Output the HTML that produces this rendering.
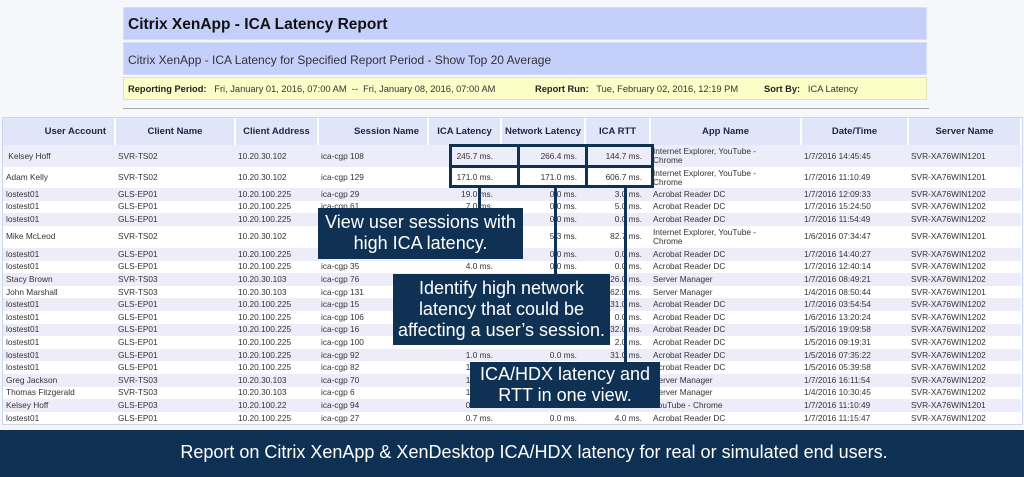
<!DOCTYPE html>
<html><head><meta charset="utf-8"><style>
*{margin:0;padding:0;box-sizing:border-box}
body{width:1024px;height:477px;overflow:hidden;background:#f6f7fb;font-family:"Liberation Sans",Arial,sans-serif;position:relative}
.abs{position:absolute}
.t1{left:123px;top:7px;width:804px;height:33px;background:#c4cffa;border:1px solid #d8def5;font-weight:bold;font-size:15.5px;color:#111;padding:8px 0 0 4px}
.t2{left:123px;top:42px;width:804px;height:33px;background:#c4cffa;border:1px solid #d8def5;font-size:12px;color:#333;padding:10px 0 0 4px}
.t3{left:123px;top:77px;width:804px;height:23px;background:#fdfdc8;border:1px solid #e2e2b8;font-size:9.3px;color:#333;white-space:pre}
.t3 span{position:absolute;top:6px}
.t3 b{color:#222}
.hr{left:123px;top:108px;width:806px;height:1px;background:#aaa}
table{position:absolute;left:3px;top:118px;width:1018px;border-collapse:collapse;table-layout:fixed;font-size:8.3px;color:#333;background:#fff;outline:1px solid #cdd5ee}
th{background:#e1e5fa;font-size:9.5px;color:#1c2545;height:27px;border-right:2px solid #fff;text-align:center;font-weight:bold}
th.r{text-align:right;padding-right:8px}
td{white-space:nowrap;overflow:hidden;padding:0 0 0 3px;line-height:9px}
tr.o td{background:#ededfa}
td.n{text-align:right;padding-right:8px}
.box{background:#0f3254;color:#fff;text-align:center;font-size:18px;line-height:21px}
.ln{background:#0f3254}
.hl{border:3px solid #0f3254}
.ban{left:0;top:430px;width:1024px;height:47px;background:#0e3052;color:#fff;font-size:18px;text-align:center;line-height:45px;padding-left:44px}
</style></head><body>
<div class="abs t1">Citrix XenApp - ICA Latency Report</div>
<div class="abs t2">Citrix XenApp - ICA Latency for Specified Report Period - Show Top 20 Average</div>
<div class="abs t3"><span style="left:4px"><b>Reporting Period:</b>   Fri, January 01, 2016, 07:00 AM  --  Fri, January 08, 2016, 07:00 AM</span><span style="left:411px"><b>Report Run:</b>   Tue, February 02, 2016, 12:19 PM</span><span style="left:640px"><b>Sort By:</b>   ICA Latency</span></div>
<div class="abs hr"></div>
<table>
<colgroup><col style="width:112px"><col style="width:120px"><col style="width:83px"><col style="width:110px"><col style="width:73px"><col style="width:84px"><col style="width:65px"><col style="width:151px"><col style="width:107px"><col style="width:113px"></colgroup>
<tr><th class="r">User Account</th><th>Client Name</th><th>Client Address</th><th class="r">Session Name</th><th>ICA Latency</th><th>Network Latency</th><th>ICA RTT</th><th>App Name</th><th>Date/Time</th><th>Server Name</th></tr>
<tr class="o" style="height:22px"><td>&nbsp;Kelsey Hoff</td><td>SVR-TS02</td><td>10.20.30.102</td><td>ica-cgp 108</td><td class="n">245.7 ms.</td><td class="n">266.4 ms.</td><td class="n">144.7 ms.</td><td>Internet Explorer, YouTube -<br>Chrome</td><td>1/7/2016 14:45:45</td><td>SVR-XA76WIN1201</td></tr>
<tr style="height:21px"><td>Adam Kelly</td><td>SVR-TS02</td><td>10.20.30.102</td><td>ica-cgp 129</td><td class="n">171.0 ms.</td><td class="n">171.0 ms.</td><td class="n">606.7 ms.</td><td>Internet Explorer, YouTube -<br>Chrome</td><td>1/7/2016 11:10:49</td><td>SVR-XA76WIN1201</td></tr>
<tr class="o" style="height:12.5px"><td>lostest01</td><td>GLS-EP01</td><td>10.20.100.225</td><td>ica-cgp 29</td><td class="n">19.0 ms.</td><td class="n">0.0 ms.</td><td class="n">3.0 ms.</td><td>Acrobat Reader DC</td><td>1/7/2016 12:09:33</td><td>SVR-XA76WIN1202</td></tr>
<tr style="height:12.5px"><td>lostest01</td><td>GLS-EP01</td><td>10.20.100.225</td><td>ica-cgp 61</td><td class="n">7.0 ms.</td><td class="n">0.0 ms.</td><td class="n">5.0 ms.</td><td>Acrobat Reader DC</td><td>1/7/2016 15:24:50</td><td>SVR-XA76WIN1202</td></tr>
<tr class="o" style="height:12.5px"><td>lostest01</td><td>GLS-EP01</td><td>10.20.100.225</td><td>ica-cgp 9</td><td class="n">7.0 ms.</td><td class="n">0.0 ms.</td><td class="n">0.0 ms.</td><td>Acrobat Reader DC</td><td>1/7/2016 11:54:49</td><td>SVR-XA76WIN1202</td></tr>
<tr style="height:22.5px"><td>Mike McLeod</td><td>SVR-TS02</td><td>10.20.30.102</td><td>ica-cgp 1</td><td class="n">5.0 ms.</td><td class="n">5.3 ms.</td><td class="n">82.7 ms.</td><td>Internet Explorer, YouTube -<br>Chrome</td><td>1/6/2016 07:34:47</td><td>SVR-XA76WIN1201</td></tr>
<tr class="o" style="height:12.6px"><td>lostest01</td><td>GLS-EP01</td><td>10.20.100.225</td><td>ica-cgp 4</td><td class="n">4.0 ms.</td><td class="n">0.0 ms.</td><td class="n">0.0 ms.</td><td>Acrobat Reader DC</td><td>1/7/2016 14:40:27</td><td>SVR-XA76WIN1202</td></tr>
<tr style="height:12.6px"><td>lostest01</td><td>GLS-EP01</td><td>10.20.100.225</td><td>ica-cgp 35</td><td class="n">4.0 ms.</td><td class="n">0.0 ms.</td><td class="n">0.0 ms.</td><td>Acrobat Reader DC</td><td>1/7/2016 12:40:14</td><td>SVR-XA76WIN1202</td></tr>
<tr class="o" style="height:12.6px"><td>Stacy Brown</td><td>SVR-TS03</td><td>10.20.30.103</td><td>ica-cgp 76</td><td class="n">3.0 ms.</td><td class="n">0.0 ms.</td><td class="n">26.0 ms.</td><td>Server Manager</td><td>1/7/2016 08:49:21</td><td>SVR-XA76WIN1202</td></tr>
<tr style="height:12.6px"><td>John Marshall</td><td>SVR-TS03</td><td>10.20.30.103</td><td>ica-cgp 131</td><td class="n">2.0 ms.</td><td class="n">0.0 ms.</td><td class="n">62.0 ms.</td><td>Server Manager</td><td>1/4/2016 08:50:44</td><td>SVR-XA76WIN1201</td></tr>
<tr class="o" style="height:12.6px"><td>lostest01</td><td>GLS-EP01</td><td>10.20.100.225</td><td>ica-cgp 15</td><td class="n">2.0 ms.</td><td class="n">0.0 ms.</td><td class="n">31.0 ms.</td><td>Acrobat Reader DC</td><td>1/7/2016 03:54:54</td><td>SVR-XA76WIN1202</td></tr>
<tr style="height:12.6px"><td>lostest01</td><td>GLS-EP01</td><td>10.20.100.225</td><td>ica-cgp 106</td><td class="n">2.0 ms.</td><td class="n">0.0 ms.</td><td class="n">0.0 ms.</td><td>Acrobat Reader DC</td><td>1/6/2016 13:20:24</td><td>SVR-XA76WIN1202</td></tr>
<tr class="o" style="height:12.6px"><td>lostest01</td><td>GLS-EP01</td><td>10.20.100.225</td><td>ica-cgp 16</td><td class="n">1.0 ms.</td><td class="n">0.0 ms.</td><td class="n">32.0 ms.</td><td>Acrobat Reader DC</td><td>1/5/2016 19:09:58</td><td>SVR-XA76WIN1202</td></tr>
<tr style="height:12.6px"><td>lostest01</td><td>GLS-EP01</td><td>10.20.100.225</td><td>ica-cgp 100</td><td class="n">1.0 ms.</td><td class="n">0.0 ms.</td><td class="n">2.0 ms.</td><td>Acrobat Reader DC</td><td>1/5/2016 09:19:31</td><td>SVR-XA76WIN1202</td></tr>
<tr class="o" style="height:12.6px"><td>lostest01</td><td>GLS-EP01</td><td>10.20.100.225</td><td>ica-cgp 92</td><td class="n">1.0 ms.</td><td class="n">0.0 ms.</td><td class="n">31.0 ms.</td><td>Acrobat Reader DC</td><td>1/5/2016 07:35:22</td><td>SVR-XA76WIN1202</td></tr>
<tr style="height:12.6px"><td>lostest01</td><td>GLS-EP01</td><td>10.20.100.225</td><td>ica-cgp 82</td><td class="n">1.0 ms.</td><td class="n">0.0 ms.</td><td class="n">0.0 ms.</td><td>Acrobat Reader DC</td><td>1/5/2016 05:39:58</td><td>SVR-XA76WIN1202</td></tr>
<tr class="o" style="height:12.6px"><td>Greg Jackson</td><td>SVR-TS03</td><td>10.20.30.103</td><td>ica-cgp 70</td><td class="n">1.0 ms.</td><td class="n">0.0 ms.</td><td class="n">0.0 ms.</td><td>Server Manager</td><td>1/7/2016 16:11:54</td><td>SVR-XA76WIN1202</td></tr>
<tr style="height:12.6px"><td>Thomas Fitzgerald</td><td>SVR-TS03</td><td>10.20.30.103</td><td>ica-cgp 6</td><td class="n">1.0 ms.</td><td class="n">0.0 ms.</td><td class="n">0.0 ms.</td><td>Server Manager</td><td>1/4/2016 10:30:45</td><td>SVR-XA76WIN1202</td></tr>
<tr class="o" style="height:12.6px"><td>Kelsey Hoff</td><td>GLS-EP03</td><td>10.20.100.22</td><td>ica-cgp 94</td><td class="n">0.7 ms.</td><td class="n">0.0 ms.</td><td class="n">0.0 ms.</td><td>YouTube - Chrome</td><td>1/7/2016 11:10:49</td><td>SVR-XA76WIN1201</td></tr>
<tr style="height:12.6px"><td>lostest01</td><td>GLS-EP01</td><td>10.20.100.225</td><td>ica-cgp 27</td><td class="n">0.7 ms.</td><td class="n">0.0 ms.</td><td class="n">4.0 ms.</td><td>Acrobat Reader DC</td><td>1/7/2016 11:15:47</td><td>SVR-XA76WIN1202</td></tr>
</table>
<div class="abs hl" style="left:449px;top:144px;width:205px;height:44px"></div>
<div class="abs ln" style="left:449px;top:165px;width:205px;height:3px"></div>
<div class="abs ln" style="left:517px;top:144px;width:3px;height:44px"></div>
<div class="abs ln" style="left:585px;top:144px;width:3px;height:44px"></div>
<div class="abs ln" style="left:478px;top:187px;width:3px;height:22px"></div>
<div class="abs ln" style="left:554px;top:187px;width:3px;height:87px"></div>
<div class="abs ln" style="left:624px;top:187px;width:3px;height:176px"></div>
<div class="abs box" style="left:318px;top:208px;width:205px;height:51px;padding-top:4px">View user sessions with<br>high ICA latency.</div>
<div class="abs box" style="left:393px;top:274px;width:217px;height:71px;padding-top:4px">Identify high network<br>latency that could be<br>affecting a user’s session.</div>
<div class="abs box" style="left:470px;top:362px;width:190px;height:46px;padding-top:2px">ICA/HDX latency and<br>RTT in one view.</div>
<div class="abs ban">Report on Citrix XenApp &amp; XenDesktop ICA/HDX latency for real or simulated end users.</div>
</body></html>
